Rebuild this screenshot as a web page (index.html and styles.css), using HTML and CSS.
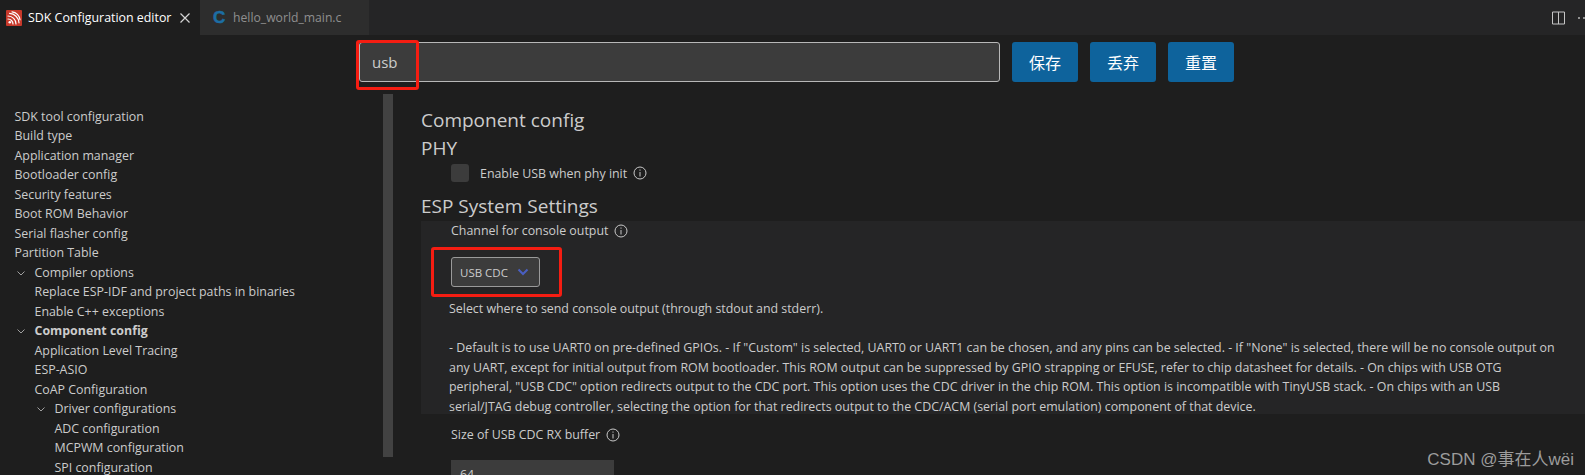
FILE: index.html
```html
<!DOCTYPE html>
<html lang="en">
<head>
  <meta charset="UTF-8">
  <meta name="viewport" content="width=device-width, initial-scale=1.0">
  <title>SDK Configuration editor</title>
  <link rel="stylesheet" href="styles.css">
</head>
<body>
  <div class="tabbar">
    <div class="tab tab-active">
      <svg class="esp-logo" width="16" height="16" viewBox="0 0 16 16">
        <rect width="16" height="16" rx="1" fill="#c8392b"/>
        <g fill="none" stroke="#fff" stroke-width="1.2" stroke-linecap="round">
          <path d="M6 1.800a9 9 0 0 1 8 8"/>
          <path d="M3.500 3.300a10 10 0 0 1 9.500 9.500"/>
          <path d="M2 6a8 8 0 0 1 8 8"/>
          <path d="M2 9a5 5 0 0 1 5 5"/>
        </g>
        <circle cx="3.800" cy="12.200" r="1.300" fill="#fff"/>
      </svg>
      <span>SDK Configuration editor</span>
      <svg class="close-icon" width="12" height="12" viewBox="0 0 12 12">
        <path d="M1.500 1.500l9 9M10.500 1.500l-9 9" stroke="#d4d4d4" stroke-width="1.200" fill="none"/>
      </svg>
    </div>
    <div class="tab tab-other">
      <span class="c-icon">C</span>
      <span>hello_world_main.c</span>
    </div>
    <div class="tab-actions">
      <svg width="13" height="14" viewBox="0 0 13 14">
        <path d="M.5 1h12v12H.500zM6.500 1v12" stroke="#c5c5c5" fill="none"/>
      </svg>
      <svg width="7" height="14" viewBox="0 0 7 14">
        <circle cx="1" cy="7" r="1" fill="#b5b5b5"/>
        <circle cx="6" cy="7" r="1" fill="#b5b5b5"/>
      </svg>
    </div>
  </div>

  <div class="searchbar">
    <div class="search-input">usb</div>
    <button class="btn">保存</button>
    <button class="btn">丢弃</button>
    <button class="btn">重置</button>
  </div>

  <div class="content">
    <ul class="sidebar">
      <li>SDK tool configuration</li>
      <li>Build type</li>
      <li>Application manager</li>
      <li>Bootloader config</li>
      <li>Security features</li>
      <li>Boot ROM Behavior</li>
      <li>Serial flasher config</li>
      <li>Partition Table</li>
      <li><svg class="chev" width="10" height="10" viewBox="0 0 10 10"><path d="M1.500 3.500L5 7l3.500-3.500" stroke="#a0a0a0" fill="none"/></svg>Compiler options</li>
      <li class="lvl1">Replace ESP-IDF and project paths in binaries</li>
      <li class="lvl1">Enable C++ exceptions</li>
      <li class="current"><svg class="chev" width="10" height="10" viewBox="0 0 10 10"><path d="M1.500 3.500L5 7l3.500-3.500" stroke="#a0a0a0" fill="none"/></svg>Component config</li>
      <li class="lvl1">Application Level Tracing</li>
      <li class="lvl1">ESP-ASIO</li>
      <li class="lvl1">CoAP Configuration</li>
      <li class="lvl1"><svg class="chev" width="10" height="10" viewBox="0 0 10 10"><path d="M1.500 3.500L5 7l3.500-3.500" stroke="#a0a0a0" fill="none"/></svg>Driver configurations</li>
      <li class="lvl2">ADC configuration</li>
      <li class="lvl2">MCPWM configuration</li>
      <li class="lvl2">SPI configuration</li>
    </ul>
    <div class="scrollbar"></div>

    <div class="main">
      <h2 class="title">Component config</h2>
      <h2 class="title">PHY</h2>
      <div class="check-row">
        <span class="checkbox"></span>
        <span>Enable USB when phy init</span>
        <svg class="info" width="14" height="14" viewBox="0 0 14 14"><circle cx="7" cy="7" r="6" fill="none" stroke="#c8c8c8"/><path d="M7 6v4.500M7 3.500v1.200" stroke="#c8c8c8" fill="none"/></svg>
      </div>
      <h2 class="title title-esp">ESP System Settings</h2>
      <div class="panel">
        <div class="field-label">
          <span>Channel for console output</span>
          <svg class="info" width="14" height="14" viewBox="0 0 14 14"><circle cx="7" cy="7" r="6" fill="none" stroke="#c8c8c8"/><path d="M7 6v4.500M7 3.500v1.200" stroke="#c8c8c8" fill="none"/></svg>
        </div>
        <div class="select">
          <span>USB CDC</span>
          <svg width="12" height="8" viewBox="0 0 12 8"><path d="M1.500 1.500L6 6l4.500-4.500" stroke="#4a5fc1" stroke-width="2" fill="none"/></svg>
        </div>
        <p class="desc">Select where to send console output (through stdout and stderr).</p>
        <p class="desc desc-gap">- Default is to use UART0 on pre-defined GPIOs. - If "Custom" is selected, UART0 or UART1 can be chosen, and any pins can be selected. - If "None" is selected, there will be no console output on<br>any UART, except for initial output from ROM bootloader. This ROM output can be suppressed by GPIO strapping or EFUSE, refer to chip datasheet for details. - On chips with USB OTG<br>peripheral, "USB CDC" option redirects output to the CDC port. This option uses the CDC driver in the chip ROM. This option is incompatible with TinyUSB stack. - On chips with an USB<br>serial/JTAG debug controller, selecting the option for that redirects output to the CDC/ACM (serial port emulation) component of that device.</p>
      </div>
      <div class="field-label field-size">
        <span>Size of USB CDC RX buffer</span>
        <svg class="info" width="14" height="14" viewBox="0 0 14 14"><circle cx="7" cy="7" r="6" fill="none" stroke="#c8c8c8"/><path d="M7 6v4.500M7 3.500v1.200" stroke="#c8c8c8" fill="none"/></svg>
      </div>
      <div class="num-input">64</div>
    </div>
  </div>

  <!-- annotations and watermark sit on top of the screenshot -->
  <div class="mark mark-search"></div>
  <div class="mark mark-select"></div>
  <div class="watermark">CSDN @事在人wëi</div>
</body>
</html>
```

FILE: styles.css
```css
html, body {
  margin: 0;
  padding: 0;
  height: 475px;
  overflow: hidden;
}

body {
  position: relative;
  background-color: #1e1e1e;
  color: #cccccc;
  font-family: "Open Sans", "Noto Sans CJK SC", sans-serif;
  font-size: 12.4px;
}

.tabbar {
  display: flex;
  height: 35px;
  background-color: #252526;
}

.tab {
  display: flex;
  align-items: center;
  height: 35px;
  box-sizing: border-box;
}

.tab-active {
  width: 200px;
  padding-left: 6px;
  background-color: #1e1e1e;
  color: #ffffff;
}

.esp-logo {
  margin-right: 6px;
}

.close-icon {
  margin-left: 8px;
}

.tab-other {
  width: 169px;
  padding-left: 13px;
  background-color: #2d2d2d;
  color: #8f8f8f;
  font-size: 12.2px;
}

.c-icon {
  width: 20px;
  color: #1c6ea4;
  font-family: "Liberation Sans", sans-serif;
  font-size: 17px;
  font-weight: bold;
  -webkit-text-stroke: 0.5px #1c6ea4;
}

.tab-actions {
  display: flex;
  align-items: center;
  gap: 13px;
  margin-left: auto;
}

.searchbar {
  display: flex;
  gap: 12px;
  height: 40px;
  padding: 7px 0 0 359px;
}

.search-input {
  width: 641px;
  height: 40px;
  box-sizing: border-box;
  padding-left: 12px;
  border: 1px solid #b8b8b8;
  border-radius: 3px;
  background-color: #3c3c3c;
  font-size: 15px;
  line-height: 38px;
}

.btn {
  width: 66px;
  height: 40px;
  padding: 0;
  border: none;
  border-radius: 3px;
  background-color: #0e639c;
  color: #ffffff;
  font-family: "Noto Sans CJK SC", sans-serif;
  font-size: 16px;
}

.content {
  display: flex;
  padding-top: 12px;
}

.sidebar {
  width: 383px;
  box-sizing: border-box;
  margin: 0;
  padding: 12.7px 0 0 14.5px;
  list-style: none;
  flex-shrink: 0;
}

.sidebar li {
  height: 19.5px;
  line-height: 19.5px;
  white-space: nowrap;
}

.chev {
  margin: 0 9px 0 1px;
  vertical-align: -1px;
}

.sidebar .lvl1 {
  padding-left: 20px;
}

.sidebar .lvl2 {
  padding-left: 40px;
}

.sidebar .current {
  font-weight: bold;
}

.scrollbar {
  width: 10px;
  height: 363px;
  background-color: #424242;
  flex-shrink: 0;
}

.main {
  flex: 1;
  padding: 13px 0 0 28px;
}

.title {
  margin: 0;
  color: #cccccc;
  font-size: 19px;
  font-weight: normal;
  line-height: 27px;
}

.title + .title {
  margin-top: 1px;
}

.check-row {
  display: flex;
  align-items: center;
  height: 18px;
  margin: 2px 0 0 30px;
}

.checkbox {
  width: 18px;
  height: 18px;
  margin-right: 11px;
  border-radius: 3px;
  background-color: #3c3c3c;
}

.info {
  margin-left: 6px;
}

.title-esp {
  margin-top: 11px;
}

.panel {
  height: 193px;
  margin-top: 1px;
  padding-left: 28px;
  background-color: #252526;
}

.field-label {
  display: flex;
  align-items: center;
  height: 19px;
  padding-left: 2px;
}

.select {
  display: flex;
  align-items: center;
  gap: 9px;
  width: 89px;
  height: 30px;
  box-sizing: border-box;
  margin: 17px 0 12px 2px;
  padding-left: 8px;
  border: 1px solid #9a9a9a;
  border-radius: 3px;
  background-color: #3c3c3c;
  font-size: 11.5px;
}

.desc {
  margin: 0;
  line-height: 19.5px;
  white-space: nowrap;
}

.desc-gap {
  margin-top: 19.5px;
}

.field-size {
  margin: 11px 0 0 28px;
}

.num-input {
  width: 163px;
  height: 30px;
  margin: 16px 0 0 30px;
  padding: 6px 0 0 9px;
  box-sizing: border-box;
  background-color: #3c3c3c;
}

.mark {
  position: absolute;
  box-sizing: border-box;
  border: 3px solid #f51d12;
  border-radius: 3px;
}

.mark-search {
  left: 356px;
  top: 40px;
  width: 63px;
  height: 50px;
}

.mark-select {
  left: 431px;
  top: 247px;
  width: 131px;
  height: 50px;
}

.watermark {
  position: absolute;
  right: 11px;
  top: 445px;
  color: #9c9c9c;
  font-family: "Liberation Sans", "Noto Sans CJK SC", sans-serif;
  font-size: 17px;
}
```
